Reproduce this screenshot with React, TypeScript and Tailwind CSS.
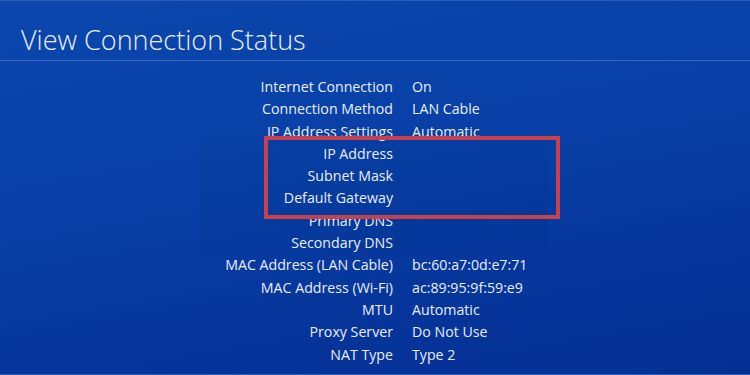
import React from "react";

const rows: [string, string][] = [
  ["Internet Connection", "On"],
  ["Connection Method", "LAN Cable"],
  ["IP Address Settings", "Automatic"],
  ["IP Address", ""],
  ["Subnet Mask", ""],
  ["Default Gateway", ""],
  ["Primary DNS", ""],
  ["Secondary DNS", ""],
  ["MAC Address (LAN Cable)", "bc:60:a7:0d:e7:71"],
  ["MAC Address (Wi-Fi)", "ac:89:95:9f:59:e9"],
  ["MTU", "Automatic"],
  ["Proxy Server", "Do Not Use"],
  ["NAT Type", "Type 2"],
];

export default function App() {
  return (
    <div
      className="relative w-[750px] h-[375px] overflow-hidden text-[#e9eef8] bg-[linear-gradient(170deg,#0b47ae_0%,#0840a7_40%,#06359b_75%,#052f93_100%)]"
      style={{ fontFamily: '"Open Sans", "Noto Sans", sans-serif' }}
    >
      <div className="h-px bg-[#2a5cb8]" />
      <div className="h-[60px] flex items-center pl-[21px] border-b border-[#3a6bc2]">
        <h1 className="text-[27px] font-light mt-[20px]">View Connection Status</h1>
      </div>
      <div className="relative pt-[15px]">
        <div className="absolute left-[200px] top-[77px] w-[348px] h-[115px] bg-black/[0.025]" />
        <div className="relative grid grid-cols-[393px_1fr] text-[14.2px] leading-[22.3px]">
          {rows.map(([label, value]) => (
            <React.Fragment key={label}>
              <div className="text-right">{label}</div>
              <div className="pl-[19px]">{value}</div>
            </React.Fragment>
          ))}
        </div>
        <div className="absolute left-[264px] top-[75px] w-[296px] h-[83px] border-[4px] border-[#c8404a]" />
      </div>
      <div className="absolute bottom-0 left-0 right-0 h-px bg-[#2a5cb8]" />
    </div>
  );
}
